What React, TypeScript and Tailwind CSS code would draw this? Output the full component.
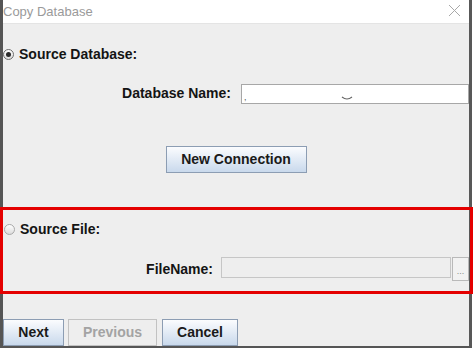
import React from "react";

const font = { fontFamily: '"Liberation Sans", Arial, sans-serif' };

function Radio({ checked }: { checked?: boolean }) {
  return (
    <span
      className={`flex h-[11px] w-[11px] shrink-0 items-center justify-center rounded-full border bg-gradient-to-b from-white to-[#dcdcdc] ${
        checked ? "border-[#6d6d6d]" : "border-[#a9a9a9]"
      }`}
    >
      {checked && <span className="h-[5px] w-[5px] rounded-full bg-[#2a2a2a]" />}
    </span>
  );
}

function Btn({
  children,
  w,
  disabled,
}: {
  children: React.ReactNode;
  w: string;
  disabled?: boolean;
}) {
  return (
    <button
      className={`${w} flex h-[27px] items-center justify-center border text-[14px] font-bold ${
        disabled
          ? "border-[#c2c2c2] bg-[#eeeeee] text-[#a3a3a3]"
          : "border-[#8c9db3] bg-gradient-to-b from-[#fbfcfe] to-[#c9d9ec] text-[#1a1a1a]"
      }`}
    >
      {children}
    </button>
  );
}

export default function App() {
  return (
    <div className="h-[353px] w-[474px] bg-white" style={font}>
      <div className="flex h-[348px] w-[472px] flex-col border-b-[2px] border-l-[3px] border-r-[3px] border-b-[#555] border-l-[#555] border-r-[#585858]">
        {/* title bar */}
        <div className="flex h-[24px] shrink-0 items-center justify-between border-b border-[#e4e4e4] bg-white pr-[8px]">
          <span className="text-[13px] leading-none text-[#9a9a9a]">Copy Database</span>
          <svg width="13" height="13" viewBox="0 0 13 13" className="mb-[2px]">
            <path d="M1 1 L12 12 M12 1 L1 12" stroke="#a8a8a8" strokeWidth="1" />
          </svg>
        </div>

        {/* body */}
        <div className="flex flex-1 flex-col bg-[#eeeeee] text-[14px] font-bold text-[#141414]">
          <div className="mt-[20px] flex h-[20px] items-center gap-[5px]">
            <Radio checked />
            <span>Source Database:</span>
          </div>

          <div className="mt-[19px] flex items-center justify-end gap-[10px]">
            <span>Database Name:</span>
            <div className="flex h-[20px] w-[228px] items-end border border-[#a7a7a7] bg-white pb-[1px] pl-[2px]">
              <span className="text-[9px] font-normal leading-none text-[#555]">,</span>
              <svg width="12" height="5" viewBox="0 0 12 5" className="mb-[1px] ml-[94px]">
                <path d="M1 1 Q6 5 11 1" stroke="#666" strokeWidth="1.2" fill="none" />
              </svg>
            </div>
          </div>

          <div className="mt-[42px] flex justify-center">
            <Btn w="w-[141px]">New Connection</Btn>
          </div>

          {/* highlighted section */}
          <div className="relative mt-[34px] flex h-[87px] flex-col">
            <div className="mt-[12px] flex h-[20px] items-center gap-[5px] pl-[1px]">
              <Radio />
              <span>Source File:</span>
            </div>
            <div className="mt-[18px] flex items-start justify-end">
              <span className="mt-[2px] mr-[8px]">FileName:</span>
              <div className="h-[21px] w-[230px] border border-[#c6c6c6] bg-[#eeeeee]" />
              <div className="ml-[1px] flex h-[24px] w-[17px] items-end justify-center border border-[#b9b9b9] bg-[#f2f2f2] pb-[4px] text-[9px] font-normal leading-none text-[#8a8a8a]">
                ...
              </div>
            </div>
            <div className="pointer-events-none absolute -left-[3px] -right-[4px] top-0 bottom-0 border-[3px] border-[#e40000]" />
          </div>

          <div className="mt-[25px] flex gap-[4px]">
            <Btn w="w-[61px]">Next</Btn>
            <Btn w="w-[89px]" disabled>
              Previous
            </Btn>
            <div className="ml-[1px]">
              <Btn w="w-[76px]">Cancel</Btn>
            </div>
          </div>
        </div>
      </div>
    </div>
  );
}
